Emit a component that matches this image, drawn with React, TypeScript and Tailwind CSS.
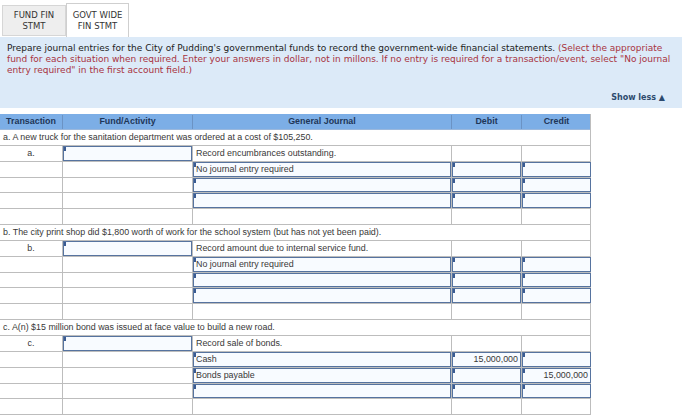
import React from 'react';

type Cell = { text?: string; input?: boolean; align?: 'left' | 'right' | 'center' };
type Row =
  | { kind: 'desc'; text: string }
  | { kind: 'line'; cells: Cell[] };

const cols = 'grid grid-cols-[63px_130px_259px_70px_69px]';

const blank: Cell = {};
const inp: Cell = { input: true };

const rows: Row[] = [
  { kind: 'desc', text: 'a. A new truck for the sanitation department was ordered at a cost of $105,250.' },
  { kind: 'line', cells: [{ text: 'a.', align: 'center' }, inp, { text: 'Record encumbrances outstanding.' }, blank, blank] },
  { kind: 'line', cells: [blank, blank, { input: true, text: 'No journal entry required' }, inp, inp] },
  { kind: 'line', cells: [blank, blank, inp, inp, inp] },
  { kind: 'line', cells: [blank, blank, inp, inp, inp] },
  { kind: 'line', cells: [blank, blank, blank, blank, blank] },
  { kind: 'desc', text: 'b. The city print shop did $1,800 worth of work for the school system (but has not yet been paid).' },
  { kind: 'line', cells: [{ text: 'b.', align: 'center' }, inp, { text: 'Record amount due to internal service fund.' }, blank, blank] },
  { kind: 'line', cells: [blank, blank, { input: true, text: 'No journal entry required' }, inp, inp] },
  { kind: 'line', cells: [blank, blank, inp, inp, inp] },
  { kind: 'line', cells: [blank, blank, inp, inp, inp] },
  { kind: 'line', cells: [blank, blank, blank, blank, blank] },
  { kind: 'desc', text: 'c. A(n) $15 million bond was issued at face value to build a new road.' },
  { kind: 'line', cells: [{ text: 'c.', align: 'center' }, inp, { text: 'Record sale of bonds.' }, blank, blank] },
  { kind: 'line', cells: [blank, blank, { input: true, text: 'Cash' }, { input: true, text: '15,000,000', align: 'right' }, inp] },
  { kind: 'line', cells: [blank, blank, { input: true, text: 'Bonds payable' }, inp, { input: true, text: '15,000,000', align: 'right' }] },
  { kind: 'line', cells: [blank, blank, inp, inp, inp] },
  { kind: 'line', cells: [blank, blank, blank, blank, blank] },
];

const TableCell: React.FC<{ cell: Cell; last: boolean }> = ({ cell, last }) => {
  const justify =
    cell.align === 'center' ? 'justify-center' : cell.align === 'right' ? 'justify-end' : 'justify-start';
  if (cell.input) {
    return (
      <div className={`h-full ${last ? '' : 'border-r border-[#bdbdbd]'}`}>
        <div className={`relative h-full flex items-center ${justify} px-[2px] border border-[#56739f] bg-[#f8fbff]`}>
          <span className="absolute left-0 top-0 w-[2px] h-[4px] bg-[#3a5b92]" />
          {cell.text}
        </div>
      </div>
    );
  }
  return (
    <div className={`h-full flex items-center ${justify} px-[3px] ${last ? '' : 'border-r border-[#bdbdbd]'}`}>
      {cell.text}
    </div>
  );
};

export default function App() {
  return (
    <div className="w-[700px] h-[415px] overflow-hidden bg-white font-['DejaVu_Sans',sans-serif]">
      {/* tabs */}
      <div className="flex items-end pl-[2px] h-[37px]">
        <div className="w-[64px] h-[31px] mb-[1px] flex items-center justify-center text-center leading-[11px] text-[8.5px] text-[#333] bg-[#eeeeee] border border-[#d6d6d6]">
          FUND FIN<br />STMT
        </div>
        <div className="w-[63px] h-[34px] flex items-center justify-center text-center leading-[11px] text-[8.5px] text-[#333] bg-white border border-b-0 border-[#cfcfcf]">
          GOVT WIDE<br />FIN STMT
        </div>
      </div>

      {/* instructions */}
      <div className="w-[682px] h-[71px] bg-[#dceaf8] pl-[7px] pr-[7px] pt-[6px] relative">
        <p className="text-[9px] leading-[11px] text-[#222]">
          Prepare journal entries for the City of Pudding's governmental funds to record the government-wide financial statements.{' '}
          <span className="text-[#a8333f]">
            (Select the appropriate fund for each situation when required. Enter your answers in dollar, not in millons. If no entry is required for a transaction/event, select "No journal entry required" in the first account field.)
          </span>
        </p>
        <div className="absolute right-[17px] bottom-[4px] text-[8px] font-bold text-[#2c4a6e]">Show less ▲</div>
      </div>

      {/* table */}
      <div className="mt-[6px] w-[591px] border-r border-[#bdbdbd] font-['Liberation_Sans',Arial,sans-serif] text-[8.9px] text-[#383838]">
        <div className={`${cols} h-[16px] pt-[1px] bg-[#7caee6] text-[#1e3658] font-bold border-b border-[#9bb8dc]`}>
          <div className="flex items-center justify-center border-r border-[#6b93c4]">Transaction</div>
          <div className="flex items-center justify-center border-r border-[#6b93c4]">Fund/Activity</div>
          <div className="flex items-center justify-center border-r border-[#6b93c4]">General Journal</div>
          <div className="flex items-center justify-center border-r border-[#6b93c4]">Debit</div>
          <div className="flex items-center justify-center">Credit</div>
        </div>
        {rows.map((row, i) =>
          row.kind === 'desc' ? (
            <div key={i} className="h-[15.85px] flex items-center px-[3px] pt-[1px] border-b border-[#bdbdbd]">
              {row.text}
            </div>
          ) : (
            <div key={i} className={`${cols} h-[15.85px] border-b border-[#bdbdbd]`}>
              {row.cells.map((c, j) => (
                <TableCell key={j} cell={c} last={j === 4} />
              ))}
            </div>
          )
        )}
      </div>
    </div>
  );
}
